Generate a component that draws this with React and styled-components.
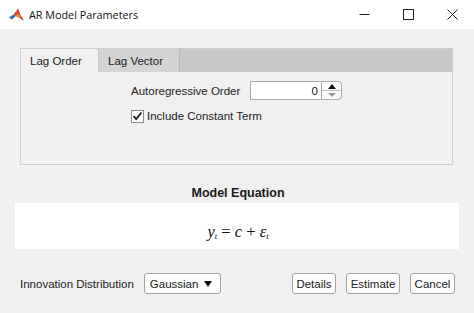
import React from 'react';
import styled, { createGlobalStyle } from 'styled-components';

const GlobalStyle = createGlobalStyle`
  html, body { margin: 0; padding: 0; background: #f0f0f0; }
  body { font-family: "Liberation Sans", Arial, sans-serif; color: #1a1a1a; }
  * { box-sizing: border-box; }
`;

const Window = styled.div`
  width: 474px;
  height: 313px;
  display: flex;
  flex-direction: column;
  background: #f0f0f0;
  overflow: hidden;
`;

const TitleBar = styled.div`
  height: 29px;
  flex: none;
  display: flex;
  align-items: center;
  background: #ffffff;
  padding-left: 9px;
`;

const Title = styled.span`
  font-family: "Open Sans", "Noto Sans", sans-serif;
  font-size: 10.8px;
  color: #111;
  margin-left: 5px;
  flex: 1;
`;

const Controls = styled.div`
  display: flex;
  height: 100%;
`;

const ControlButton = styled.div`
  width: 44px;
  height: 100%;
  display: flex;
  align-items: center;
  justify-content: center;
`;

const Body = styled.div`
  flex: 1;
  display: flex;
  flex-direction: column;
`;

const TabGroup = styled.div`
  margin: 19px 21px 0 20px;
  height: 117px;
  border: 1px solid #cfcfcf;
  display: flex;
  flex-direction: column;
`;

const TabStrip = styled.div`
  height: 23px;
  flex: none;
  display: flex;
  background: #c8c8c8;
`;

const Tab = styled.div`
  width: ${p => p.$w}px;
  display: flex;
  align-items: center;
  padding-left: 9px;
  font-size: 11.5px;
  color: #222;
  background: ${p => (p.$active ? '#f0f0f0' : '#d4d4d4')};
  border-right: 1px solid ${p => (p.$active ? '#c8c8c8' : '#b4b4b4')};
`;

const TabContent = styled.div`
  flex: 1;
  display: flex;
  flex-direction: column;
  gap: 9px;
  padding: 9px 0 0 110px;
`;

const Row = styled.div`
  display: flex;
  align-items: center;
  height: ${p => p.$h || 18}px;
`;

const Label = styled.span`
  font-size: 11.5px;
  color: #222;
  width: ${p => (p.$w ? `${p.$w}px` : 'auto')};
`;

const NumberField = styled.div`
  display: flex;
  height: 19px;
`;

const Input = styled.div`
  width: 71px;
  height: 100%;
  background: #fff;
  border: 1px solid #a8a8a8;
  border-right: none;
  font-size: 11.5px;
  display: flex;
  align-items: center;
  justify-content: flex-end;
  padding-right: 3px;
`;

const Spinner = styled.div`
  width: 21px;
  height: 100%;
  border: 1px solid #a8a8a8;
  border-radius: 0 4px 4px 0;
  background: #fbfbfb;
  display: flex;
  flex-direction: column;
`;

const SpinHalf = styled.div`
  flex: 1;
  display: flex;
  align-items: center;
  justify-content: center;
  border-top: ${p => (p.$lower ? '1px solid #c0c0c0' : 'none')};
`;

const Check = styled.div`
  width: 13px;
  height: 13px;
  border: 1px solid #8a8a8a;
  background: #fff;
  margin-right: 3px;
  display: flex;
  align-items: center;
  justify-content: center;
`;

const SectionTitle = styled.div`
  margin-top: 21px;
  text-align: center;
  font-weight: bold;
  font-size: 12.5px;
  color: #1a1a1a;
  padding-left: 2px;
`;

const EquationBox = styled.div`
  margin: 3px 15px 0 15px;
  height: 46px;
  background: #fff;
  display: flex;
  justify-content: center;
  padding-top: 20px;
  padding-left: 2px;
`;

const Equation = styled.div`
  font-family: "Liberation Serif", "Times New Roman", serif;
  font-size: 16.5px;
  line-height: 18px;
  color: #111;
  i { font-style: italic; }
  sub { font-size: 8.5px; vertical-align: -2px; font-style: italic; }
`;

const BottomRow = styled.div`
  margin: 24px 0 0 20px;
  display: flex;
  align-items: center;
  height: 21px;
`;

const Dropdown = styled.div`
  margin-left: 10px;
  width: 77px;
  height: 21px;
  border: 1px solid #a3a3a3;
  border-radius: 3px;
  background: #fdfdfd;
  display: flex;
  align-items: center;
  justify-content: space-between;
  padding: 0 8px 0 5px;
  font-size: 11.5px;
`;

const Spacer = styled.div`
  flex: 1;
`;

const Buttons = styled.div`
  display: flex;
  gap: 10px;
  margin-right: 19px;
`;

const Button = styled.div`
  width: ${p => p.$w}px;
  height: 21px;
  border: 1px solid #a3a3a3;
  border-radius: 3px;
  background: #fdfdfd;
  display: flex;
  align-items: center;
  justify-content: center;
  font-size: 11.5px;
  color: #222;
`;

const MatlabLogo = () => (
  <svg width="15" height="14" viewBox="0 0 15 14">
    <path d="M0 9.5 L4.5 6.5 L6.5 8.2 L3.2 11.5 Z" fill="#2a6fb0" />
    <path d="M4.5 6.5 L9 0.5 L11 6 L6.5 8.2 Z" fill="#d9532a" />
    <path d="M9 0.5 L11 6 L15 13 L12 11 L10 8.5 Z" fill="#c0391b" />
    <path d="M6.5 8.2 L11 6 L12 11 Z" fill="#e98a2e" />
  </svg>
);

export default function App() {
  return (
    <Window>
      <GlobalStyle />
      <TitleBar>
        <MatlabLogo />
        <Title>AR Model Parameters</Title>
        <Controls>
          <ControlButton>
            <svg width="11" height="11" viewBox="0 0 11 11">
              <line x1="0.5" y1="5.5" x2="10.5" y2="5.5" stroke="#222" strokeWidth="1" />
            </svg>
          </ControlButton>
          <ControlButton>
            <svg width="11" height="11" viewBox="0 0 11 11">
              <rect x="0.5" y="0.5" width="10" height="10" fill="none" stroke="#222" strokeWidth="1" />
            </svg>
          </ControlButton>
          <ControlButton>
            <svg width="11" height="11" viewBox="0 0 11 11">
              <path d="M0.5 0.5 L10.5 10.5 M10.5 0.5 L0.5 10.5" stroke="#222" strokeWidth="1" />
            </svg>
          </ControlButton>
        </Controls>
      </TitleBar>
      <Body>
        <TabGroup>
          <TabStrip>
            <Tab $w={78} $active>Lag Order</Tab>
            <Tab $w={81}>Lag Vector</Tab>
          </TabStrip>
          <TabContent>
            <Row $h={19}>
              <Label $w={119}>Autoregressive Order</Label>
              <NumberField>
                <Input>0</Input>
                <Spinner>
                  <SpinHalf>
                    <svg width="8" height="5" viewBox="0 0 8 5"><path d="M0 5 L4 0 L8 5 Z" fill="#111" /></svg>
                  </SpinHalf>
                  <SpinHalf $lower>
                    <svg width="8" height="4" viewBox="0 0 8 4"><path d="M0 0 L8 0 L4 4 Z" fill="#9a9a9a" /></svg>
                  </SpinHalf>
                </Spinner>
              </NumberField>
            </Row>
            <Row $h={14}>
              <Check>
                <svg width="11" height="10" viewBox="0 0 11 10">
                  <path d="M1.5 5 L4.2 8 L9.5 1.5" fill="none" stroke="#1a1a1a" strokeWidth="1.8" />
                </svg>
              </Check>
              <Label>Include Constant Term</Label>
            </Row>
          </TabContent>
        </TabGroup>
        <SectionTitle>Model Equation</SectionTitle>
        <EquationBox>
          <Equation>
            <i>y</i><sub>t</sub> = <i>c</i> + <i>ε</i><sub>t</sub>
          </Equation>
        </EquationBox>
        <BottomRow>
          <Label>Innovation Distribution</Label>
          <Dropdown>
            <span>Gaussian</span>
            <svg width="8" height="6" viewBox="0 0 8 6"><path d="M0 0 L8 0 L4 6 Z" fill="#111" /></svg>
          </Dropdown>
          <Spacer />
          <Buttons>
            <Button $w={44}>Details</Button>
            <Button $w={54}>Estimate</Button>
            <Button $w={45}>Cancel</Button>
          </Buttons>
        </BottomRow>
      </Body>
    </Window>
  );
}
